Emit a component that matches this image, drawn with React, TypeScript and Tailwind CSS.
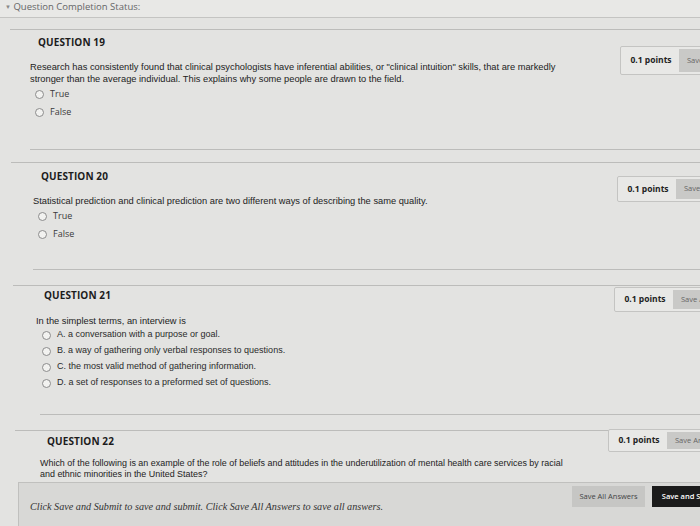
import React from 'react';

// Blackboard-style test page (questions 19-22, bottom save bar)

type Question = {
  num: number;
  text: React.ReactNode;
  options: string[];
  // spacing tweaks per question, the photo drifts a little
  section: string;
  content: string;
  header: string;
  textCls: string;
  opts: string;
  row: string;
  box: string;
  boxH: string;
  line: string;
};

const questions: Question[] = [
  {
    num: 19,
    text: (
      <>
        Research has consistently found that clinical psychologists have inferential abilities, or "clinical intuition" skills, that are markedly
        <br />
        stronger than the average individual. This explains why some people are drawn to the field.
      </>
    ),
    options: ['True', 'False'],
    section: 'ml-[0px] mb-[12px]',
    content: 'pl-[20px] pt-[5px]',
    header: 'pl-[8px]',
    textCls: 'mt-[12px] leading-[12px] text-[9.3px]',
    opts: 'ml-[5px] font-["Open_Sans",sans-serif] text-[9px] text-[#3a3a3a]',
    row: 'h-[18px]',
    box: 'mt-[11px] mr-[0px]',
    boxH: 'h-[29px]',
    line: 'ml-[20px] mt-[28px]',
  },
  {
    num: 20,
    text: 'Statistical prediction and clinical prediction are two different ways of describing the same quality.',
    options: ['True', 'False'],
    section: 'ml-[1px] mb-[15px]',
    content: 'pl-[22px] pt-[6px]',
    header: 'pl-[8px]',
    textCls: 'mt-[12px] leading-[12px] text-[9.3px]',
    opts: 'ml-[5px] font-["Open_Sans",sans-serif] text-[9px] text-[#3a3a3a]',
    row: 'h-[18px]',
    box: 'mt-[7px] mr-[3px]',
    boxH: 'h-[26px]',
    line: 'ml-[22px] mt-[26px]',
  },
  {
    num: 21,
    text: 'In the simplest terms, an interview is',
    options: [
      'A. a conversation with a purpose or goal.',
      'B. a way of gathering only verbal responses to questions.',
      'C. the most valid method of gathering information.',
      'D. a set of responses to a preformed set of questions.',
    ],
    section: 'ml-[3px] mb-[15px]',
    content: 'pl-[23px] pt-[2px]',
    header: 'pl-[8px]',
    textCls: 'mt-[13px] leading-[12px] text-[9.3px]',
    opts: 'ml-[6px] text-[9px] text-[#2a2a2a]',
    row: 'h-[16px]',
    box: 'mt-[-1px] mr-[6px]',
    boxH: 'h-[25px]',
    line: 'ml-[27px] mt-[23px]',
  },
  {
    num: 22,
    text: (
      <>
        Which of the following is an example of the role of beliefs and attitudes in the underutilization of mental health care services by racial
        <br />
        and ethnic minorities in the United States?
      </>
    ),
    options: [],
    section: 'ml-[5px]',
    content: 'pl-[25px] pt-[3px]',
    header: 'pl-[7px]',
    textCls: 'mt-[10px] leading-[11px] text-[8.95px]',
    opts: '',
    row: '',
    box: 'mt-[-5px] mr-[12px]',
    boxH: 'h-[23px]',
    line: 'hidden',
  },
];

const Radio = () => (
  <span className="inline-block w-[9px] h-[9px] rounded-full border border-[#8c8c8c] bg-[#f2f2f0] shrink-0" />
);

const PointsBox = ({ q }: { q: Question }) => (
  <div
    className={`float-right ${q.box} ${q.boxH} w-[150px] flex items-stretch border border-[#c4c4c2] bg-[#e8e8e6] rounded-[2px] p-[2px]`}
  >
    <span className="w-[56px] flex items-center justify-center font-['Open_Sans',sans-serif] font-bold text-[8.5px] text-[#222]">
      0.1 points
    </span>
    <span className="flex-1 flex items-center pl-[8px] bg-[#c9c9c7] font-['Open_Sans',sans-serif] text-[7.5px] text-[#666]">
      Save Answer
    </span>
  </div>
);

const QuestionBlock = ({ q }: { q: Question }) => (
  <section className={`border-t border-[#bcbcba] ${q.section}`}>
    <div className={q.content}>
      <PointsBox q={q} />
      <h3 className={`${q.header} h-[14px] leading-[14px] font-['Open_Sans',sans-serif] font-bold text-[10px] text-[#1c1c1c] tracking-[0.1px]`}>
        QUESTION {q.num}
      </h3>
      <p className={`${q.textCls} text-[#222] whitespace-nowrap`}>{q.text}</p>
      {q.options.length > 0 && (
        <div className={q.opts}>
          {q.options.map((o) => (
            <div key={o} className={`${q.row} flex items-center gap-[6px]`}>
              <Radio />
              <span>{o}</span>
            </div>
          ))}
        </div>
      )}
    </div>
    <div className={`${q.line} border-t border-[#bcbcba]`} />
  </section>
);

export default function App() {
  return (
    <div className="w-[700px] h-[526px] overflow-hidden bg-[#e3e3e1] font-['Liberation_Sans',Arial,sans-serif]">
      {/* completion status strip */}
      <div className="h-[18px] border-b border-[#c4c4c2] bg-[#e8e8e6] pl-[5px] pt-[1px] font-['Open_Sans',sans-serif] text-[9.5px] leading-[11px] text-[#666]">
        <span className="text-[6px] align-middle text-[#888]">▼</span> Question Completion Status:
      </div>

      <div className="w-[770px] pl-[10px] pt-[11px]">
        {questions.map((q) => (
          <QuestionBlock key={q.num} q={q} />
        ))}

        {/* save bar */}
        <div className="ml-[8px] mt-[2px] w-[752px] h-[60px] flex items-start border-t border-l border-[#c0c0be] bg-[#d8d8d6] pl-[11px] pr-[38px]">
          <p className="flex-1 mt-[18px] leading-[12px] font-['Liberation_Serif','Times_New_Roman',serif] italic text-[10.2px] text-[#333]">
            Click Save and Submit to save and submit. Click Save All Answers to save all answers.
          </p>
          <div className="mt-[3px] flex gap-[7px]">
            <button className="w-[73px] h-[21px] bg-[#c6c6c4] font-['Open_Sans',sans-serif] text-[7.5px] text-[#444]">
              Save All Answers
            </button>
            <button className="w-[80px] h-[21px] bg-[#1b1b1b] font-['Open_Sans',sans-serif] font-semibold text-[7.5px] text-white">
              Save and Submit
            </button>
          </div>
        </div>
      </div>
    </div>
  );
}
